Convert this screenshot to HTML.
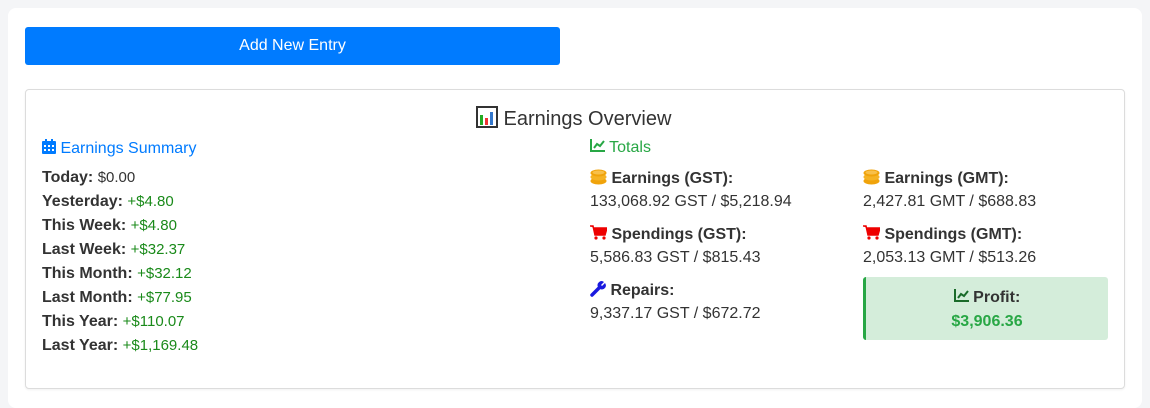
<!DOCTYPE html>
<html><head><meta charset="utf-8"><style>
*{margin:0;padding:0;box-sizing:border-box}
body{width:1150px;height:400px;background:#f4f5f7;font-family:"Liberation Sans",Arial,sans-serif;color:#333;position:relative;overflow:hidden}
.panel{position:absolute;left:8px;top:8px;width:1134px;height:400px;background:#fff;border-radius:8px}
.btn{position:absolute;left:25px;top:27px;width:535px;height:38px;background:#007bff;border-radius:3px;color:#fff;font-size:16px;text-align:center;line-height:38px}
.card{position:absolute;left:25px;top:89px;width:1100px;height:300px;border:1px solid #dcdcdc;border-radius:4px;background:#fff;box-shadow:0 1px 2px rgba(0,0,0,.06)}
.a{position:absolute;white-space:nowrap}
.h{font-size:20px;color:#333}
.row{font-size:16px;font-weight:bold;color:#333}
.row span{font-weight:normal;font-size:15px;color:#1a8a1a}
.lbl{font-size:16px;font-weight:bold;color:#333}
.val{font-size:16px;color:#333}
.profit{position:absolute;left:863px;top:277px;width:245px;height:63px;background:#d4edda;border-left:3px solid #28a745;border-radius:3px;text-align:center}
</style></head><body>
<div class="panel"></div>
<div class="btn">Add New Entry</div>
<div class="card"></div>
<div class="a h" style="left:476px;top:106px">
<svg width="22" height="22" viewBox="0 0 22 22" style="vertical-align:-3px"><rect x="1" y="1" width="20" height="20" fill="#fff" stroke="#333" stroke-width="2"/><rect x="4" y="9" width="3" height="10" fill="#2a2"/><rect x="9" y="12" width="3" height="7" fill="#e33"/><rect x="14" y="6" width="3" height="13" fill="#37c"/></svg> Earnings Overview</div>
<div class="a" style="left:42px;top:139px;font-size:16px;color:#007bff">
<svg width="14" height="15" viewBox="0 0 14 15" style="vertical-align:-1px"><rect x="0" y="2" width="14" height="13" rx="1" fill="#007bff"/><rect x="3" y="0" width="2" height="3" fill="#007bff"/><rect x="9" y="0" width="2" height="3" fill="#007bff"/><g fill="#fff"><rect x="2" y="6" width="2" height="2"/><rect x="6" y="6" width="2" height="2"/><rect x="10" y="6" width="2" height="2"/><rect x="2" y="10" width="2" height="2"/><rect x="6" y="10" width="2" height="2"/><rect x="10" y="10" width="2" height="2"/></g></svg> Earnings Summary</div>
<div class="a row" style="left:42px;top:169px">Today: <span style="color:#333">$0.00</span></div>
<div class="a row" style="left:42px;top:193px">Yesterday: <span>+$4.80</span></div>
<div class="a row" style="left:42px;top:217px">This Week: <span>+$4.80</span></div>
<div class="a row" style="left:42px;top:241px">Last Week: <span>+$32.37</span></div>
<div class="a row" style="left:42px;top:265px">This Month: <span>+$32.12</span></div>
<div class="a row" style="left:42px;top:289px">Last Month: <span>+$77.95</span></div>
<div class="a row" style="left:42px;top:313px">This Year: <span>+$110.07</span></div>
<div class="a row" style="left:42px;top:337px">Last Year: <span>+$1,169.48</span></div>
<div class="a" style="left:590px;top:139px;font-size:16px;color:#28a745">
<svg width="15" height="13" viewBox="0 0 15 13" style="vertical-align:0"><path d="M1 0V12H15" fill="none" stroke="#28a745" stroke-width="2"/><path d="M4 9L7 5L10 7L14 2" fill="none" stroke="#28a745" stroke-width="2"/></svg> Totals</div>
<svg width="0" height="0" style="position:absolute"><defs>
<symbol id="coin" viewBox="0 0 16 16"><ellipse cx="8" cy="12" rx="8" ry="3.5" fill="#f0a30a"/><ellipse cx="8" cy="8" rx="8" ry="3.5" fill="#f5b324"/><ellipse cx="8" cy="4" rx="8" ry="3.5" fill="#f0a30a"/><ellipse cx="8" cy="3.5" rx="6" ry="2" fill="#f8c04a"/></symbol>
<symbol id="cart" viewBox="0 0 17 15"><path d="M0 1H3L5 10H15L17 3H4" fill="#e00" stroke="#e00" stroke-width="1.5"/><circle cx="6" cy="13" r="1.6" fill="#e00"/><circle cx="14" cy="13" r="1.6" fill="#e00"/></symbol>
</defs></svg>
<div class="a lbl" style="left:590px;top:169px"><svg width="17" height="16" style="vertical-align:-2px"><use href="#coin"/></svg> Earnings (GST):</div>
<div class="a val" style="left:590px;top:193px">133,068.92 GST / $5,218.94</div>
<div class="a lbl" style="left:590px;top:225px"><svg width="17" height="15" style="vertical-align:-1px"><use href="#cart"/></svg> Spendings (GST):</div>
<div class="a val" style="left:590px;top:249px">5,586.83 GST / $815.43</div>
<div class="a lbl" style="left:590px;top:281px"><svg width="16" height="16" viewBox="0 0 16 16" style="vertical-align:-2px"><path d="M2 14L9 7" stroke="#1a1adf" stroke-width="3.5" stroke-linecap="round"/><path d="M8 6A4 4 0 0 1 14 1L11 4L12 5L15 2A4 4 0 0 1 10 8Z" fill="#1a1adf"/></svg> Repairs:</div>
<div class="a val" style="left:590px;top:305px">9,337.17 GST / $672.72</div>
<div class="a lbl" style="left:863px;top:169px"><svg width="17" height="16" style="vertical-align:-2px"><use href="#coin"/></svg> Earnings (GMT):</div>
<div class="a val" style="left:863px;top:193px">2,427.81 GMT / $688.83</div>
<div class="a lbl" style="left:863px;top:225px"><svg width="17" height="15" style="vertical-align:-1px"><use href="#cart"/></svg> Spendings (GMT):</div>
<div class="a val" style="left:863px;top:249px">2,053.13 GMT / $513.26</div>
<div class="profit">
<div style="font-size:16px;font-weight:bold;color:#333;margin-top:12px"><svg width="15" height="13" viewBox="0 0 15 13"><path d="M1 0V12H15" fill="none" stroke="#1a6b2a" stroke-width="2"/><path d="M4 9L7 5L10 7L14 2" fill="none" stroke="#1a6b2a" stroke-width="2"/></svg> Profit:</div>
<div style="font-size:16px;font-weight:bold;color:#28a745;margin-top:6px">$3,906.36</div>
</div>
</body></html>
